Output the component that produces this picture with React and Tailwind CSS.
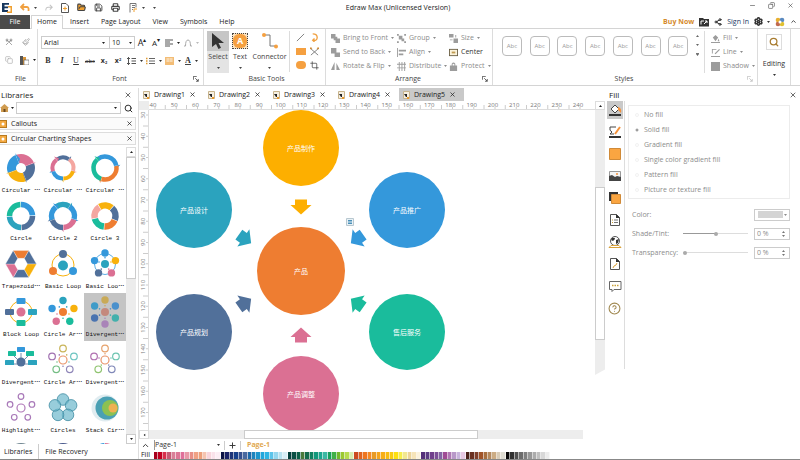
import clsx from "clsx";
import {
  ChevronUp,
  CircleHelp,
  Copy,
  Crop,
  FolderOpen,
  Minus,
  Paintbrush,
  Plus,
  Printer,
  Save,
  Scissors,
  Search,
  Settings,
  Share2,
  X,
} from "lucide-react";

const C = {
  teal: "#2ba3be",
  blue: "#3498db",
  slate: "#51709a",
  pink: "#db7093",
  amber: "#f8b10c",
  orange: "#ee7d31",
  green: "#1abc9c",
  salmon: "#f4a6a0",
};

const palette = [
  "#a8001c", "#c00020", "#d9304c", "#c65a74", "#d98098", "#dc7796", "#e0709a", "#e89aa8", "#e88f86", "#f0a184", "#eda07a", "#f6c4b0", "#f8d5dc", "#f9e2ea", "#fbeef4",
  "#0c1445", "#1a2468", "#1c3578", "#16418c", "#36508e", "#4a6aa0", "#1f6aa8", "#1d84bd", "#1c96cc", "#22a7dc", "#2fb4e4", "#5cc4ea", "#94d6ee", "#b8e2f0", "#d8eef6",
  "#04403c", "#0a4f44", "#0b6048", "#4a7a3a", "#146b4c", "#0f8060", "#12987c", "#1ca690", "#3cb8a4", "#18a05c", "#40b048", "#74b82c", "#9cc832", "#b8dc50", "#d8ecb0",
  "#cc4a20", "#e06420", "#ee7620", "#f48a24", "#e89a24", "#f4a41c", "#f8ae14", "#f8bc10", "#f8cc10", "#fce010", "#f6ee4c", "#f2e890", "#ecd49a", "#f6e4b8", "#fbf2dc",
  "#54307a", "#5c3c84", "#70408c", "#7c5098", "#8466a4", "#a04c94", "#b078b4", "#b898c8", "#c8b4dc", "#e6c8e2",
  "#4a2018", "#6a3020", "#80402c", "#a05428", "#a87040", "#b48a60", "#ccac84", "#d8ccb8", "#dedcd2",
  "#080808", "#303030", "#505050", "#6c6c6c", "#808080", "#989898", "#acacac", "#c0c0c0", "#d8d8d8", "#ececec",
];

function Caret({ className }) {
  return (
    <svg viewBox="0 0 3 2" className={clsx("h-0.5 w-[3px] shrink-0", className)} fill="currentColor">
      <path d="M0 0h3L1.500 2z" />
    </svg>
  );
}

function Launcher() {
  return (
    <svg viewBox="0 0 8 8" className="size-1.5" fill="none" stroke="currentColor">
      <path d="M0.5 5V0.5H5M3 3l4 4M7 4v3H4" />
    </svg>
  );
}

// Library thumbnails, all centred on 17,17

const polar = (r, deg) => {
  const a = ((deg - 90) * Math.PI) / 180;
  return [17 + r * Math.cos(a), 17 + r * Math.sin(a)];
};

function Ring({ r, width, colors, start = 0, heads }) {
  const step = 360 / colors.length;
  return colors.map((color, i) => {
    const a = start + i * step;
    const [x1, y1] = polar(r, a);
    const [x2, y2] = polar(r, a + step - 3);
    const tip = [polar(r + width / 2 + 2, a + step - 2), polar(r, a + step + 13), polar(r - width / 2, a + step - 2)];
    return (
      <g key={i}>
        <path d={`M${x1} ${y1}A${r} ${r} 0 0 1 ${x2} ${y2}`} fill="none" stroke={color} strokeWidth={width} />
        {heads && <path d={`M${tip[0]}L${tip[1]}L${tip[2]}z`} fill={color} />}
      </g>
    );
  });
}

function Hub({ center, colors, r = 3.7, orbit = 11.5, outline, link, start = 0 }) {
  const paint = (color) => (outline ? { fill: "#fff", stroke: color, strokeWidth: 1.2 } : { fill: color });
  return (
    <>
      {colors.map((color, i) => {
        const angle = start + (i * 360) / colors.length;
        const [x, y] = polar(orbit, angle);
        const [lx, ly] = polar(6.3, link === "between" ? angle + 180 / colors.length : angle);
        return (
          <g key={i}>
            {link && <circle cx={lx} cy={ly} r="0.8" fill={color} />}
            <circle cx={x} cy={y} r={r} {...paint(color)} />
          </g>
        );
      })}
      {center && <circle cx="17" cy="17" r="4" {...paint(center)} />}
    </>
  );
}

function Hexagon() {
  const colors = [C.slate, C.amber, C.slate, C.pink, C.slate, C.orange];
  return colors.map((color, i) => {
    const a = 30 + i * 60;
    return (
      <path
        key={i}
        d={`M${polar(15.5, a)}L${polar(15.5, a + 60)}L${polar(6.5, a + 60)}L${polar(6.5, a)}z`}
        fill={color}
        stroke="#fff"
        strokeWidth="0.3"
      />
    );
  });
}

const library = [
  { label: "Circular ", cut: true, art: <Ring r={9.5} width={9} start={-20} heads colors={[C.pink, C.slate, C.amber, C.blue]} /> },
  { label: "Circular ", cut: true, art: <Ring r={10.5} width={4} start={-36} heads colors={[C.slate, C.salmon, C.amber, C.blue, C.pink]} /> },
  { label: "Circular ", cut: true, art: <Ring r={11.5} width={4.5} start={-40} heads colors={[C.blue, C.orange, C.green]} /> },
  { label: "Circle", art: <Ring r={11.5} width={5.5} colors={[C.blue, C.slate, C.teal, C.green]} /> },
  { label: "Circle 2", art: <Ring r={11.5} width={5.5} start={-36} heads colors={[C.teal, C.blue, C.pink, C.slate, C.blue]} /> },
  { label: "Circle 3", art: <Ring r={10.5} width={6.5} start={-30} colors={[C.amber, C.slate, C.orange, C.green, C.salmon]} /> },
  { label: "Trapezoid", cut: true, art: <Hexagon /> },
  {
    label: "Basic Loop",
    art: (
      <>
        <circle cx="17" cy="18" r="11" fill="none" stroke={C.amber} strokeWidth="1" />
        <circle cx="17" cy="7" r="4" fill={C.slate} />
        <circle cx="27" cy="24" r="4" fill={C.blue} />
        <circle cx="7" cy="24" r="4" fill={C.orange} />
        <circle cx="17" cy="18.500" r="5" fill={C.teal} />
      </>
    ),
  },
  {
    label: "Basic Loo",
    cut: true,
    art: (
      <>
        <circle cx="17" cy="17" r="10.500" fill="none" stroke={C.blue} strokeWidth="0.8" />
        <Hub center={C.teal} colors={[C.blue, C.amber, C.pink, C.slate, C.blue]} orbit={11} link="spoke" />
      </>
    ),
  },
  {
    label: "Block Loop",
    art: (
      <>
        <circle cx="17" cy="17" r="11" fill="none" stroke={C.amber} strokeWidth="1" />
        <rect x="12.500" y="3" width="9" height="6" rx="1" fill={C.blue} />
        <rect x="12.500" y="25" width="9" height="6" rx="1" fill={C.green} />
        <rect x="1" y="14" width="9" height="6" rx="1" fill={C.slate} />
        <rect x="24" y="14" width="9" height="6" rx="1" fill={C.teal} />
        <circle cx="17" cy="17" r="4.500" fill={C.pink} />
      </>
    ),
  },
  { label: "Circle Ar", cut: true, art: <Hub center={C.orange} colors={[C.teal, C.amber, C.green, C.pink, C.blue]} link="between" /> },
  {
    label: "Divergent",
    cut: true,
    selected: true,
    art: <Hub center="#c4897d" colors={["#c9aa57", "#4a90cc", "#43b0ac", "#a983b8", "#4a73b0", "#3f9bc8"]} link="spoke" orbit={12} />,
  },
  {
    label: "Divergent",
    cut: true,
    art: (
      <>
        <path d="M17 19V10M17 20L8 11M17 20l9-9M17 21H5M17 21h12" stroke={C.slate} strokeWidth="0.8" />
        <rect x="13" y="4" width="8" height="5" rx="0.500" fill={C.blue} />
        <rect x="4" y="8" width="8" height="5" rx="0.500" fill={C.green} />
        <rect x="22" y="8" width="8" height="5" rx="0.500" fill={C.green} />
        <rect x="1" y="17" width="9" height="5" rx="0.500" fill={C.teal} />
        <rect x="24" y="17" width="9" height="5" rx="0.500" fill={C.teal} />
        <circle cx="17" cy="19" r="4.500" fill={C.slate} />
      </>
    ),
  },
  { label: "Circle Ar", cut: true, art: <Hub outline center="#e8956a" colors={["#c9b458", "#6cc4c0", "#8f86b8", "#74bd84", "#a070b0"]} r={3.3} link="between" /> },
  { label: "Divergent", cut: true, art: <Hub outline center="#e8956a" colors={["#e6a26c", "#6cc4b0", "#8088b8", "#90c470", "#b070b0"]} r={3.3} link="spoke" /> },
  { label: "Highlight", cut: true, art: <Hub outline center="#b078b8" colors={Array(5).fill("#a878b8")} r={2.8} /> },
  {
    label: "Circles",
    art: [0, 72, 144, 216, 288].map((a) => {
      const [x, y] = polar(8.5, a);
      return <circle key={a} cx={x} cy={y} r="5.800" fill="#6cb8cc" fillOpacity="0.7" stroke="#3f8ba2" strokeWidth="0.8" />;
    }),
  },
  {
    label: "Stack Cir",
    cut: true,
    art: (
      <>
        <circle cx="17" cy="17" r="13.500" fill="#e0ecf0" />
        <circle cx="19" cy="17" r="11.500" fill="#4aa0b4" />
        <circle cx="22" cy="17" r="8" fill="#8cc152" />
        <circle cx="25" cy="17" r="4.500" fill="#eeb152" />
      </>
    ),
  },
  { label: "", art: <circle cx="17" cy="17" r="12" fill="#9fc0c8" stroke="#6f8590" strokeWidth="2" /> },
  { label: "", art: <circle cx="17" cy="17" r="12" fill="#7fa8d8" stroke="#48588c" strokeWidth="2" /> },
  { label: "", art: <Ring r={7} width={12} start={-90} colors={[C.blue, C.pink, C.teal, C.amber]} /> },
];

function QuickAccess() {
  return (
    <div className="flex flex-1 items-center gap-2 pl-0.5 text-[#444]">
      <svg viewBox="0 0 10 10" className="size-2.5">
        <path d="M0 0h7v1.800H2.500v1.700H6v1.800H2.500v1.700H6V9H0z" fill="#17375e" />
        <path d="M6 3h4v7H5V8.500h3.500v-4H6z" fill="#f0a030" />
      </svg>
      <button aria-label="Undo" className="flex items-center gap-1">
        <svg viewBox="0 0 10 10" className="size-2.5" fill="none" stroke="#f0a040" strokeWidth="1.800">
          <path d="M1 4h6q2 0 1.500 4M4 1L1 4l3 3" />
        </svg>
        <Caret />
      </button>
      <button aria-label="Redo">
        <svg viewBox="0 0 10 10" className="size-2" fill="none" stroke="#c4c4c4" strokeWidth="1.300">
          <path d="M9 4H4Q1 4 1 8M6 1l3 3-3 3" />
        </svg>
      </button>
      <button aria-label="New">
        <svg viewBox="0 0 8 10" className="h-2.5 w-2" fill="none" stroke="#555">
          <path d="M0.500 0.500h4.500l2.500 2.500v6.500h-7z" />
          <path d="M4 3.500v4M2 5.500h4" stroke="#f0a030" />
        </svg>
      </button>
      <button aria-label="Open"><FolderOpen size={9} strokeWidth={3} className="fill-[#f0a030]" /></button>
      <button aria-label="Save"><Save size={9} strokeWidth={2.5} /></button>
      <button aria-label="Print"><Printer size={9} strokeWidth={3} /></button>
      <button aria-label="Export" className="flex items-center gap-1">
        <svg viewBox="0 0 10 10" className="size-2.5" fill="none" stroke="#777">
          <path d="M2 9.500V0.500h6v4M4 2.500h3M4 4.500h3M4 6.500h1" />
          <path d="M6 9V6h3" stroke="#f0a030" />
        </svg>
        <Caret />
      </button>
      <button aria-label="Customize toolbar"><Caret /></button>
    </div>
  );
}

function TitleBar() {
  return (
    <header className="flex h-[15px] items-center">
      <QuickAccess />
      <h1 className="text-[7px] font-normal">Edraw Max (Unlicensed Version)</h1>
      <div className="flex flex-1 items-start justify-end gap-3 pb-1 pr-1.5 text-[#444]">
        <button aria-label="Minimize"><Minus size={7} /></button>
        <button aria-label="Restore"><Copy size={7} className="-scale-x-100" /></button>
        <button aria-label="Close"><X size={7} /></button>
      </div>
    </header>
  );
}

function MenuBar() {
  return (
    <nav className="flex h-3.5 items-center border-b border-[#d4d4d4] whitespace-nowrap">
      <button className="h-3.5 w-[30px] bg-[#4b4b4b] text-center text-white">File</button>
      <button className="ml-px h-3.5 w-8 border border-b-0 border-[#d4d4d4] bg-white">Home</button>
      <div className="flex flex-1 gap-3 pl-[7px]">
        {["Insert", "Page Layout", "View", "Symbols", "Help"].map((name) => (
          <button key={name}>{name}</button>
        ))}
      </div>
      <div className="flex items-center gap-[5px] pr-[3px] text-[#333]">
        <a href="#buy" className="font-bold text-[#d58a2c]">Buy Now</a>
        <button aria-label="Publish">
          <svg viewBox="0 0 10 10" className="size-2.5">
            <path d="M0 1h4l1 1h5v7.500H0z" fill="#333" />
            <path d="M2 7.500V4h3M5 7l3-3M6 4h2v2" fill="none" stroke="#fff" />
          </svg>
        </button>
        <button aria-label="Share"><Share2 size={8} strokeWidth={3} /></button>
        <button className="text-[#203864]">Sign In</button>
        <button aria-label="Options" className="flex items-center gap-1">
          <Settings size={9} strokeWidth={4} />
          <Caret />
        </button>
        <button aria-label="Theme">
          <svg viewBox="0 0 10 10" className="size-2.5">
            <circle cx="3" cy="3" r="2.300" fill="#e8b030" />
            <circle cx="7" cy="3" r="2.300" fill="#5a8ac0" />
            <circle cx="3" cy="7" r="2.300" fill="#c06a50" />
            <circle cx="7" cy="7" r="2.300" fill="#e0c030" />
            <circle cx="5" cy="5" r="1.500" fill="#fff" />
          </svg>
        </button>
        <button aria-label="Collapse ribbon"><ChevronUp size={7} strokeWidth={3} /></button>
      </div>
    </nav>
  );
}

function Group({ title, launcher, dim, className, children }) {
  return (
    <section className={clsx("flex flex-col border-r border-[#dcdcdc]", className)}>
      <div className="flex h-[44px] items-start">{children}</div>
      <div className="flex h-3 items-center px-1">
        <h2 className="flex-1 pl-1 text-center font-normal text-[#444]">{title}</h2>
        {launcher && (
          <button aria-label={`${title} settings`} className={dim ? "text-[#bbb]" : "text-[#333]"}>
            <Launcher />
          </button>
        )}
      </div>
    </section>
  );
}

function Tool({ label, caret, className, children }) {
  return (
    <button aria-label={label} className={clsx("flex h-3 items-center justify-center gap-1", caret ? "w-[19px]" : "w-3.5", className)}>
      {children}
      {caret && <Caret />}
    </button>
  );
}

function FontGroup() {
  return (
    <Group title="Font" launcher className="w-[166px]">
      <div className="flex flex-col gap-1.5 pt-[7px] pr-px pl-[3px]">
        <div className="flex items-center">
          <label className="flex h-[13px] w-[69px] items-center border border-[#ccc] pr-1">
            <select aria-label="Font" className="min-w-0 flex-1 appearance-none pl-0.5 outline-none">
              <option>Arial</option>
            </select>
            <Caret />
          </label>
          <label className="flex h-[13px] w-[25px] items-center border border-l-0 border-[#ccc] pr-0.5">
            <select aria-label="Font size" className="min-w-0 flex-1 appearance-none pl-0.5 outline-none">
              <option>10</option>
            </select>
            <Caret />
          </label>
          <Tool label="Grow font"><span className="text-[9px]">A</span><sup className="-ml-1 text-[6px]">▴</sup></Tool>
          <Tool label="Shrink font"><span className="text-[8px]">A</span><sup className="-ml-1 text-[6px]">▾</sup></Tool>
          <Tool label="Align" caret>
            <svg viewBox="0 0 8 8" className="size-2" stroke="#555" strokeWidth="1.200"><path d="M0 1h8M0 3h5M0 5h8M0 7h5" /></svg>
          </Tool>
          <Tool label="Text on path" caret className="text-[#bbb]">
            <svg viewBox="0 0 8 8" className="size-2" fill="none" stroke="#aaa"><path d="M0 7h1.500Q1.500 1 4 1t2.500 6H8" /></svg>
          </Tool>
        </div>
        <div className="flex items-center text-[8px] text-[#333]">
          <Tool label="Bold"><b className="font-['Liberation_Serif']">B</b></Tool>
          <Tool label="Italic"><i className="font-['Liberation_Serif'] font-bold">I</i></Tool>
          <Tool label="Underline"><u className="font-['Liberation_Serif']">U</u></Tool>
          <Tool label="Strikethrough"><s className="text-[6px]">abc</s></Tool>
          <Tool label="Subscript"><b className="text-[7px]">x<sub className="text-[4px]">2</sub></b></Tool>
          <Tool label="Superscript"><b className="text-[7px]">x<sup className="text-[4px]">2</sup></b></Tool>
          <Tool label="Line spacing" caret>
            <svg viewBox="0 0 9 8" className="h-2 w-[9px]" fill="none" stroke="#555"><path d="M1.500 0v8M0 2l1.500-1.500L3 2M0 6l1.500 1.500L3 6M4.500 1.500H9M4.500 4H9M4.500 6.500H9" /></svg>
          </Tool>
          <Tool label="Bullets" caret>
            <svg viewBox="0 0 9 8" className="h-2 w-[9px]"><path d="M3 1.500h6M3 4h6M3 6.500h6" stroke="#666" /><path d="M0 1.500h1.500M0 4h1.500M0 6.500h1.500" stroke="#e0982c" strokeWidth="1.500" /></svg>
          </Tool>
          <Tool label="Highlight" caret>
            <svg viewBox="0 0 9 8" className="h-2 w-[9px]"><path d="M0 0h9v8H0z" fill="#f3bd76" /><path d="M1 2h7M1 4h7M3 1v4M6 1v4" stroke="#fff" strokeWidth="0.500" /></svg>
          </Tool>
          <Tool label="Font color" caret><span className="border-b border-[#444] font-['Liberation_Serif'] text-[8px] leading-[7px] font-bold">A</span></Tool>
        </div>
      </div>
    </Group>
  );
}

function BasicTools() {
  return (
    <Group title="Basic Tools" className="w-[122px]">
      <button className="mt-0.5 ml-[3px] flex w-[22px] flex-col items-center bg-[#e4e4e4] pb-1 text-[#444]">
        <span className="flex h-5 w-full items-center justify-center bg-[#c6c6c6]">
          <svg viewBox="0 0 12 16" className="h-4 w-3" fill="#333"><path d="M0 0v14l4-3 2.500 5 2.500-1.200L6.500 10H12z" /></svg>
        </span>
        <span className="leading-3">Select</span>
        <Caret className="mt-1" />
      </button>
      <button className="mt-0.5 flex w-[22px] flex-col items-center text-[#444]">
        <span className="flex h-5 items-center">
          <span className="flex size-4 items-center justify-center border border-dotted border-[#444] bg-[#fbe3c2]">
            <span className="size-3.5 rounded-md bg-[#f5a040] text-[9px] leading-[14px] font-bold text-white">A</span>
          </span>
        </span>
        <span className="leading-3">Text</span>
        <Caret className="mt-1" />
      </button>
      <button className="mt-0.5 flex w-[37px] flex-col items-center text-[#444]">
        <span className="flex h-5 items-center">
          <svg viewBox="0 0 18 18" className="size-[18px]">
            <path d="M3 3h6v11h6" fill="none" stroke="#777" />
            <circle cx="3" cy="3" r="2" fill="#f5a040" />
            <circle cx="15" cy="14.500" r="2" fill="#f5a040" />
          </svg>
        </span>
        <span className="leading-3">Connector</span>
        <Caret className="mt-1" />
      </button>
      <div className="mt-0.5 ml-px grid h-[41px] flex-1 grid-cols-2 place-items-center border-l border-[#dcdcdc] px-1">
        <button aria-label="Line"><svg viewBox="0 0 10 10" className="size-[9px]" stroke="#777"><path d="M1 9l8-8" /></svg></button>
        <button aria-label="Arc"><svg viewBox="0 0 10 10" className="size-[9px]" fill="none" stroke="#f0a040" strokeWidth="1.500"><path d="M3 1q5 0 5 4T3 8M5 6L3 8l2 2" /></svg></button>
        <button aria-label="Rectangle" className="h-[7px] w-2.5 bg-[#f5a040]" />
        <button aria-label="Cross lines"><svg viewBox="0 0 10 10" className="size-[9px]" stroke="#777"><path d="M1 2l8 7M1 9l8-7" /><circle cx="1" cy="1.500" r="0.800" stroke="#f0a040" /><circle cx="9" cy="1.500" r="0.800" stroke="#f0a040" /></svg></button>
        <button aria-label="Ellipse" className="h-2 w-2.5 rounded-full bg-[#f5a040]" />
        <button aria-label="Crop"><Crop size={9} className="text-[#444]" /></button>
      </div>
    </Group>
  );
}

const glyphs = {
  front: <path d="M0 0h5v5H0zM5 5h5v5H5zM3 3h4v4H3z" />,
  back: <path d="M0 0h6v6H0zM4 5h6v5H4z" />,
  rotate: <path d="M4 0v9H0zM6 1v8h4z" />,
  group: <path d="M0 0h2v2H0zM8 0h2v2H8zM0 8h2v2H0zM8 8h2v2H8zM2 2h4v4H2zM5 5h3v3H5z" />,
  align: <path d="M0 0h1v10H0zM2 2h8v2H2zM2 6h5v2H2z" />,
  distribute: <path d="M2 0h1v10H2zM5 0h1v10H5zM8 0h1v10H8zM0 2h10v1H0zM0 6h10v1H0z" />,
  size: <path d="M0 0h5v4H0zM5 5h5v5H5zM7 1h1v3H7zM1 6h3v1H1z" />,
  center: (
    <>
      <path d="M0 1h10v8H0z" fill="#6b6046" />
      <path d="M1 2h8v6H1z" fill="#fbf3dc" />
      <path d="M3 4h4v2H3z" fill="#c09a50" />
    </>
  ),
  protect: <path d="M1 4h8v6H1zM3 4V2q2-3 4 0v2H6V2.500q-1-1-2 0V4z" />,
  fill: <path d="M0 9h10v1H0zM2 4l3-3 3 3-3 4zM8 5l1.500 3H7.500z" />,
  line: <path d="M0 9h10v1H0zM1 1h5v1H2v4H1zM4 6l5-5 1 1-5 5z" />,
  shadow: <path d="M0 0h10v10H0z" />,
};

function Command({ icon, label, caret = true, active }) {
  return (
    <button className={clsx("flex h-3.5 items-center gap-[3px] whitespace-nowrap", active ? "text-[#333]" : "text-[#8c8c8c]")}>
      <svg viewBox="0 0 10 10" className="size-[9px] shrink-0" fill="#9c9c9c">{glyphs[icon]}</svg>
      {label}
      {caret && <Caret />}
    </button>
  );
}

function Ribbon() {
  return (
    <div className="flex h-[57px] border-b border-[#d4d4d4]">
      <Group title="File" className="w-[38px]">
        <div className="grid w-full grid-cols-2 gap-y-1.5 px-0.5 pt-[7px]">
          <Tool label="Cut"><Scissors size={8} className="rotate-90 text-[#777]" /></Tool>
          <Tool label="Format painter"><Paintbrush size={8} className="text-[#999]" /></Tool>
          <Tool label="Copy"><Copy size={8} className="text-[#aaa]" /></Tool>
          <Tool label="Paste" caret>
            <svg viewBox="0 0 9 9" className="size-[9px]"><path d="M0 1h6v8H0z" fill="#d9963a" /><path d="M0 0h3v9H0z" fill="#555" /><path d="M4 4h5v5H4z" fill="#fff" stroke="#555" strokeWidth="0.600" /></svg>
          </Tool>
        </div>
      </Group>
      <FontGroup />
      <BasicTools />
      <Group title="Arrange" launcher className="w-[167px]">
        <div className="grid grid-cols-[66px_52px_42px] pt-0.5 pl-[5px]">
          <Command icon="front" label="Bring to Front" />
          <Command icon="group" label="Group" />
          <Command icon="size" label="Size" />
          <Command icon="back" label="Send to Back" />
          <Command icon="align" label="Align" />
          <Command icon="center" label="Center" caret={false} active />
          <Command icon="rotate" label="Rotate & Flip" />
          <Command icon="distribute" label="Distribute" />
          <Command icon="protect" label="Protect" />
        </div>
      </Group>
      <Group title="Styles" launcher dim className="flex-1">
        <div className="flex flex-1 items-center justify-between pt-1.5 pr-[5px] pl-[9px]">
          {Array.from({ length: 7 }, (_, i) => (
            <button key={i} className="size-5 rounded-sm border border-[#bbb] text-center text-[6px] text-[#999]">Abc</button>
          ))}
          <div className="flex flex-col gap-[7px] text-[#666]">
            <button aria-label="Previous styles" className="flex"><Caret className="rotate-180" /></button>
            <button aria-label="Next styles" className="flex"><Caret /></button>
            <button aria-label="All styles" className="flex border-t border-[#777]"><Caret /></button>
          </div>
        </div>
        <div className="mt-0.5 flex w-[53px] flex-col border-l border-[#dcdcdc] pl-1.5">
          <Command icon="fill" label="Fill" />
          <Command icon="line" label="Line" />
          <Command icon="shadow" label="Shadow" />
        </div>
      </Group>
      <Group className="mr-[9px] w-[33px]">
        <button className="flex flex-1 flex-col items-center pt-[5px] text-[#333]">
          <span className="flex size-4 items-center justify-center border border-[#ddd]">
            <Search size={10} strokeWidth={3} className="text-[#a87c30]" />
          </span>
          <span className="pt-2 leading-3">Editing</span>
          <Caret className="mt-1" />
        </button>
      </Group>
    </div>
  );
}

function LibraryHeader({ title }) {
  return (
    <div className="mb-0.5 flex h-[13px] items-center border border-l-0 border-[#ddd] bg-[#fbfbfb] pr-0.5">
      <svg viewBox="0 0 8 8" className="mr-[3px] size-2">
        <path d="M0 0h7v8H0z" fill="#b87a20" />
        <path d="M0 1h6v6H0z" fill="#f4a940" />
        <circle cx="3" cy="4" r="1.500" fill="#fff" />
      </svg>
      <h3 className="flex-1 font-normal">{title}</h3>
      <button aria-label={`Close ${title}`}><X size={7} strokeWidth={2.500} /></button>
    </div>
  );
}

function LibraryPanel() {
  return (
    <aside className="flex w-[139px] flex-col border-r border-[#ddd] pr-0.5">
      <div className="flex h-3.5 items-center px-px pr-1">
        <h2 className="flex-1 text-[8px] font-normal">Libraries</h2>
        <button aria-label="Close libraries"><X size={8} /></button>
      </div>
      <div className="mb-[3px] flex items-center">
        <button aria-label="Home" className="flex w-4 items-center gap-0.5">
          <svg viewBox="0 0 9 8" className="h-2 w-[9px]"><path d="M0 4l4.500-4L9 4H8v4H1V4z" fill="#d09c50" /><path d="M3.500 5h2v3h-2z" fill="#6b4a20" /></svg>
          <Caret />
        </button>
        <label className="flex h-3 flex-1 items-center border border-[#ccc] pr-[3px]">
          <input aria-label="Search shapes" className="min-w-0 flex-1 outline-none" />
          <Caret />
        </label>
        <button aria-label="Search" className="px-[3px]"><Search size={9} strokeWidth={2.500} /></button>
      </div>
      <LibraryHeader title="Callouts" />
      <LibraryHeader title="Circular Charting Shapes" />
      <div className="flex min-h-0 flex-1">
        <div className="grid min-w-0 flex-1 auto-rows-[48px] grid-cols-3 content-start overflow-hidden pt-0.5">
          {library.map(({ label, cut, selected, art }, i) => (
            <button key={i} className={clsx("flex flex-col items-center overflow-hidden pt-0.5", selected && "bg-[#c4c4c4]")}>
              <svg viewBox="0 0 34 34" className="size-[34px] shrink-0">{art}</svg>
              <span className="pt-px font-['Liberation_Mono'] text-[6px] leading-[10px] whitespace-pre text-[#111]">
                {label}
                {cut && <span className="font-['Noto_Sans_CJK_SC'] leading-[0] font-bold" lang="zh">…</span>}
              </span>
            </button>
          ))}
        </div>
        <div className="flex w-2.5 flex-col bg-[#ececec]">
          <button aria-label="Scroll up" className="flex h-2.5 items-center justify-center border border-[#ddd] bg-white"><Caret className="rotate-180" /></button>
          <div className="h-[122px] border border-[#ccc] bg-white" />
          <button aria-label="Scroll down" className="mt-auto flex h-2.5 items-center justify-center border border-[#ccc] bg-white"><Caret /></button>
        </div>
      </div>
      <div className="flex h-[15px] shrink-0 items-center">
        <button className="h-full border-r border-[#ccc] px-1.5 pl-1">Libraries</button>
        <button className="px-1.5">File Recovery</button>
      </div>
    </aside>
  );
}

// One ruler division of ten units is a little over 21px
const division = 21.25;

function TopRuler() {
  return (
    <svg className="h-[9px] min-w-0 flex-1 border-b border-[#ddd] bg-white">
      {Array.from({ length: 21 }, (_, i) => (
        <g key={i}>
          <path d={`M${i * division - 5} 9V4M${i * division + 6} 9V6`} stroke="#ccc" />
          <text x={i * division + 4} y="6" textAnchor="middle" className="fill-[#777] text-[6px]">{40 + i * 10}</text>
        </g>
      ))}
    </svg>
  );
}

function SideRuler() {
  return (
    <svg className="h-full w-[10px] shrink-0 border-r border-[#ddd]">
      {Array.from({ length: 15 }, (_, i) => (
        <g key={i}>
          <path d={`M9 ${i * division + 16}H4M9 ${i * division + 5}H7`} stroke="#ccc" />
          <text transform={`translate(6 ${i * division + 5}) rotate(-90)`} textAnchor="middle" className="fill-[#777] text-[6px]">{30 + i * 10}</text>
        </g>
      ))}
    </svg>
  );
}

const nodes = [
  { x: 152, y: 38, r: 38, color: "#fdaf00", text: "产品制作" },
  { x: 45, y: 100, r: 38, color: C.teal, text: "产品设计" },
  { x: 258, y: 100, r: 38, color: C.blue, text: "产品推广" },
  { x: 152, y: 161, r: 44, color: C.orange, text: "产品" },
  { x: 45, y: 222, r: 38, color: C.slate, text: "产品规划" },
  { x: 258, y: 222, r: 38, color: C.green, text: "售后服务" },
  { x: 152, y: 284, r: 38, color: C.pink, text: "产品调整" },
];

const arrows = [
  { x: 152, y: 97, turn: 0, color: "#fdaf00" },
  { x: 96, y: 129, turn: -55, color: C.teal },
  { x: 208, y: 129, turn: 55, color: C.blue },
  { x: 96, y: 193, turn: -125, color: C.slate },
  { x: 208, y: 193, turn: 125, color: C.green },
  { x: 152, y: 225, turn: 180, color: C.pink },
];

function Drawing() {
  return (
    <svg className="h-full min-w-0 flex-1" lang="zh">
      {nodes.map(({ x, y, r, color, text }) => (
        <g key={text}>
          <circle cx={x} cy={y} r={r} fill={color} />
          <text x={x} y={y + 3} textAnchor="middle" className="fill-white font-['Noto_Sans_CJK_SC',sans-serif] text-[7px]">{text}</text>
        </g>
      ))}
      {arrows.map(({ x, y, turn, color }) => (
        <path
          key={color}
          transform={`translate(${x} ${y}) rotate(${turn})`}
          d="M-6 -7.500H6V-2H10.500L0 7.500L-10.500 -2H-6z"
          fill={color}
        />
      ))}
      <path d="M197.500 108.500h7v7h-7z" fill="#e8f1f6" stroke="#b8c8d0" />
      <path d="M199 110.500h4M199 112h4M199 113.500h4" stroke="#4a90b8" />
    </svg>
  );
}

function DocTab({ name, active }) {
  return (
    <div className={clsx("flex h-[13px] items-center gap-1 pr-2 pl-1", active && "bg-[#c9c9c9]")}>
      <svg viewBox="0 0 7 8" className="h-2 w-[7px]"><path d="M0.500 0.500h6v7h-6z" fill="#f7f0e2" stroke="#c8b48c" /><path d="M1 3h3v3H3z" fill="#222" /><path d="M4 6h2v2H4z" fill="#e89a30" /></svg>
      <button className="w-[31px] whitespace-nowrap">{name}</button>
      <button aria-label={`Close ${name}`}><X size={7} strokeWidth={2.500} /></button>
    </div>
  );
}

function Workspace() {
  return (
    <main className="flex min-w-0 flex-1 flex-col">
      <div className="flex">
        {[1, 2, 3, 4, 5].map((n) => (
          <DocTab key={n} name={`Drawing${n}`} active={n === 5} />
        ))}
      </div>
      <div className="flex min-h-0 flex-1">
        <div className="flex min-w-0 flex-1 flex-col">
          <div className="flex h-[9px]">
            <div className="w-2.5 bg-[#ececec]" />
            <TopRuler />
          </div>
          <div className="flex min-h-0 flex-1">
            <SideRuler />
            <Drawing />
          </div>
          <div className="mr-3 flex h-[9px] bg-[#ededed]">
            <button aria-label="Scroll left" className="flex w-2.5 items-center justify-center border border-[#ddd] bg-white"><Caret className="rotate-90" /></button>
            <div className="ml-[95px] w-[234px] border border-[#ccc] bg-white" />
          </div>
        </div>
        <div className="mb-16 flex w-2.5 flex-col bg-[#ededed] [clip-path:polygon(0_0,100%_0,100%_98%,0_100%)]">
          <button aria-label="Scroll up" className="flex h-[9px] items-center justify-center border border-[#ddd] bg-white"><Caret className="rotate-180" /></button>
          <div className="mt-[77px] h-[153px] border border-[#ccc] bg-white" />
        </div>
      </div>
      <div className="flex h-3 items-center text-[#333]">
        <button aria-label="Show pages" className="px-0.5"><ChevronUp size={9} strokeWidth={2.500} /></button>
        <button className="ml-0.5 flex w-[66px] items-center justify-between border-l border-[#999]">Page-1 <Caret /></button>
        <button aria-label="Add page" className="mx-1 border-x border-[#ccc] px-[3px]"><Plus size={9} strokeWidth={2.500} /></button>
        <button className="ml-0.5 font-bold text-[#dfa850]">Page-1</button>
      </div>
      <div className="flex h-2 items-center pr-[55px]">
        <span className="w-[15px] pl-0.5 leading-2">Fill</span>
        <div className="flex h-[7px] flex-1">
          {palette.map((color) => (
            <button key={color} aria-label={color} className="flex-1 border-r border-white/60" style={{ backgroundColor: color }} />
          ))}
        </div>
      </div>
    </main>
  );
}

const sideTools = [
  {
    label: "Fill",
    art: <><path d="M1 11h12v2H1z" fill="#333" /><path d="M3 6l4-4 4 4-4 4z" fill="#fff" stroke="#444" /><path d="M10 4q4 1 3 6l-3-3z" fill="#f5923a" /></>,
  },
  {
    label: "Line",
    art: <><path d="M1 11h12v2H1z" fill="#333" /><path d="M6 9H2l2-2Q1 6 2 2h6" fill="none" stroke="#444" /><path d="M7 9l5-7" stroke="#f5923a" strokeWidth="2" /></>,
  },
  { label: "Theme color", art: <path d="M1.500 1.500h11v11h-11z" fill="#faa541" stroke="#d08a38" /> },
  {
    label: "Picture",
    art: <><path d="M1.500 2.500h11v9h-11z" fill="#f4f4f4" stroke="#999" /><path d="M1 12V7l3-1 3 2 2-1 4 1v4z" fill="#444" /><circle cx="9" cy="5" r="1" fill="#f5923a" /></>,
  },
  { label: "Shadow", art: <><path d="M1 1h9v9H1z" fill="#333" /><path d="M3.500 3.500h9v9h-9z" fill="#faa541" stroke="#d08a38" /></> },
  {
    label: "Properties",
    art: <><path d="M2.500 1.500h6l3 3v8h-9z" fill="#fff" stroke="#555" /><path d="M8 1v4h4z" fill="#333" /><path d="M6 7h4M6 9.500h4" stroke="#777" /><path d="M4 7h1M4 9.500h1" stroke="#d0a030" /></>,
  },
  {
    label: "Hyperlink",
    art: <><circle cx="7" cy="6" r="4.500" fill="#fff" stroke="#555" /><path d="M4 3q3-1 3 1L5 6 3 5zM8 5l3-1-1 4-2 1z" fill="#333" /><path d="M1 12.500l2-2h8l2 2z" fill="none" stroke="#d9a23c" /></>,
  },
  {
    label: "Attachment",
    art: <><path d="M2.500 1.500h6l3 3v8h-9z" fill="#fff" stroke="#555" /><path d="M8 1v4h4z" fill="#333" /><path d="M5 11l1-2 2-1 1-2" fill="none" stroke="#d9a23c" /></>,
  },
  {
    label: "Comment",
    art: <><path d="M1.500 2.500h11.500v8H6l-2 2v-2H1.500z" fill="#fff" stroke="#666" /><path d="M4 6.500h1.500M6.500 6.500H8M9 6.500h1.500" stroke="#c9a23c" strokeWidth="1.500" /></>,
  },
  { label: "Help" },
];

function SideTools() {
  return (
    <div className="flex w-5 shrink-0 flex-col items-center gap-1 self-start border-r border-[#ddd] pb-[52px]">
      {sideTools.map(({ label, art }, i) => (
        <button key={label} aria-label={label} className={clsx("flex h-[18px] w-4 items-center justify-center", i === 0 && "bg-[#c9c9c9]")}>
          {art ? <svg viewBox="0 0 14 14" className="size-3.5">{art}</svg> : <CircleHelp size={13} className="text-[#a08850]" />}
        </button>
      ))}
    </div>
  );
}

function SliderRow({ id, label, value, track }) {
  return (
    <div className="flex h-[19px] items-center">
      <label htmlFor={id} className="w-[51px] shrink-0 whitespace-nowrap">{label}</label>
      <input
        id={id}
        type="range"
        defaultValue={value}
        className={clsx(
          "h-px min-w-0 flex-1 appearance-none [&::-webkit-slider-thumb]:size-1 [&::-webkit-slider-thumb]:appearance-none [&::-webkit-slider-thumb]:rounded-full [&::-webkit-slider-thumb]:bg-[#aaa]",
          track,
        )}
      />
      <div className="ml-1.5 flex h-3 w-9 shrink-0 items-center border border-[#ccc] pr-1">
        <input aria-label={`${label} value`} defaultValue="0 %" className="min-w-0 flex-1 pl-0.5 outline-none" />
        <span className="flex flex-col gap-0.5 text-[#777]">
          <button aria-label={`Increase ${label}`} className="flex"><Caret className="rotate-180" /></button>
          <button aria-label={`Decrease ${label}`} className="flex"><Caret /></button>
        </span>
      </div>
    </div>
  );
}

const fillModes = ["No fill", "Solid fill", "Gradient fill", "Single color gradient fill", "Pattern fill", "Picture or texture fill"];

function FillPanel() {
  return (
    <aside className="flex w-[195px] shrink-0 flex-col">
      <div className="flex h-[13px] items-center pr-[3px] pl-1">
        <h2 className="flex-1 text-[8px] font-normal">Fill</h2>
        <button aria-label="Close fill panel"><X size={8} /></button>
      </div>
      <div className="flex">
        <SideTools />
        <div className="flex min-w-0 flex-1 flex-col pt-1 pr-2.5 pl-[3px] text-[#8c8c8c]">
          <fieldset className="min-w-0 border border-[#ececec] py-px">
            {fillModes.map((mode) => (
              <label key={mode} className="flex h-[15px] items-center gap-[5px] pl-1.5">
                <input
                  type="radio"
                  name="fill"
                  defaultChecked={mode === "Solid fill"}
                  className="size-1 appearance-none rounded-full border border-[#f2f2f2] checked:scale-75 checked:border-[#999] checked:bg-[#999]"
                />
                {mode}
              </label>
            ))}
          </fieldset>
          <div className="flex flex-col pt-1.5 pl-1">
            <div className="flex h-[19px] items-center justify-between">
              <span>Color:</span>
              <button aria-label="Color" className="flex h-3 w-9 items-center justify-between border border-[#ccc] px-0.5">
                <span className="ml-px h-[7px] w-[25px] bg-[#d4d4d4]" />
                <Caret />
              </button>
            </div>
            <SliderRow id="shade" label="Shade/Tint:" value={50} track="bg-linear-to-r from-[#999] from-50% to-[#ddd] to-50%" />
            <SliderRow id="transparency" label="Transparency:" value={0} track="bg-[#ddd]" />
          </div>
        </div>
      </div>
    </aside>
  );
}

export default function App() {
  return (
    <div className="flex h-screen flex-col overflow-hidden border-b border-[#888] bg-white font-['Open_Sans','Noto_Sans',sans-serif] text-[7px] leading-[10px] text-[#222]">
      <TitleBar />
      <MenuBar />
      <Ribbon />
      <div className="flex min-h-0 flex-1 pt-0.5">
        <LibraryPanel />
        <Workspace />
        <FillPanel />
      </div>
    </div>
  );
}
